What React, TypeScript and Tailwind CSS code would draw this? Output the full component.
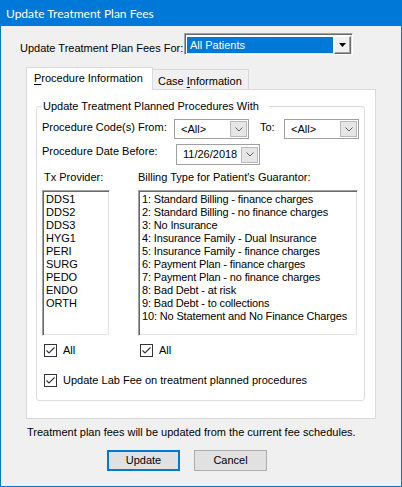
import React from "react";

const font = { fontFamily: '"Liberation Sans", Arial, sans-serif' };

function Check() {
  return (
    <span className="w-[13px] h-[13px] border border-[#333333] bg-white flex items-center justify-center shrink-0">
      <svg width="11" height="11" viewBox="0 0 11 11">
        <polyline points="1.5,5.5 4,8 9.5,2.5" fill="none" stroke="#333333" strokeWidth="1.1" />
      </svg>
    </span>
  );
}

function SmallCombo({ text, w }: { text: string; w: string }) {
  return (
    <div className={`${w} h-[20px] border border-[#a0a0a0] bg-white flex items-center justify-between pl-[6px] pr-[1px] shrink-0`}>
      <span className="text-[11px] leading-[13px] text-black whitespace-nowrap">{text}</span>
      <span className="w-[17px] h-[16px] border border-[#b9b9b9] bg-[#e6e6e6] flex items-center justify-center">
        <svg width="8" height="5" viewBox="0 0 8 5">
          <polyline points="0.5,0.5 4,4 7.5,0.5" fill="none" stroke="#606060" strokeWidth="1" />
        </svg>
      </span>
    </div>
  );
}

const providers = ["DDS1", "DDS2", "DDS3", "HYG1", "PERI", "SURG", "PEDO", "ENDO", "ORTH"];
const billing = [
  "1: Standard Billing - finance charges",
  "2: Standard Billing - no finance charges",
  "3: No Insurance",
  "4: Insurance Family - Dual Insurance",
  "5: Insurance Family - finance charges",
  "6: Payment Plan - finance charges",
  "7: Payment Plan - no finance charges",
  "8: Bad Debt - at risk",
  "9: Bad Debt - to collections",
  "10: No Statement and No Finance Charges",
];

const sunken =
  "border-t border-l border-t-[#a0a0a0] border-l-[#a0a0a0] border-b border-r border-b-white border-r-white shadow-[inset_1px_1px_0_#696969,inset_-1px_-1px_0_#e3e3e3]";

export default function App() {
  return (
    <div
      className="w-[402px] h-[487px] border border-[#0078d7] bg-[#f0f0f0] flex flex-col text-black text-[11px] leading-[13px] whitespace-nowrap"
      style={font}
    >
      <div
        className="h-[25px] bg-[#0078d7] text-white text-[12px] flex items-center pl-[5px]"
        style={{ fontFamily: 'Lato, "Noto Sans", sans-serif' }}
      >
        Update Treatment Plan Fees
      </div>

      <div className="pl-[19px] flex flex-col">
        {/* top row */}
        <div className="mt-[7px] flex items-start">
          <span className="w-[164px] shrink-0 mt-[9px]">Update Treatment Plan Fees For:</span>
          <div className={`w-[169px] h-[22px] shrink-0 ${sunken} bg-white flex p-[1px] pl-[2px] pt-[2px]`}>
            <div className="flex-1 h-[16px] bg-[#0078d7] text-white flex items-center pl-[3px] mt-[1px]">All Patients</div>
            <div className="w-[17px] h-[18px] ml-[1px] bg-[#f0f0f0] border-t border-l border-t-white border-l-white border-b border-r border-b-[#696969] border-r-[#696969] shadow-[inset_-1px_-1px_0_#a0a0a0] flex items-center justify-center">
              <svg width="7" height="4" viewBox="0 0 7 4">
                <polygon points="0,0 7,0 3.5,4" fill="#000" />
              </svg>
            </div>
          </div>
        </div>

        {/* tabs */}
        <div className="ml-[6px] mt-[12px] flex flex-col">
          <div className="h-[22px] flex items-end">
            <div className="w-[127px] h-[23px] -mb-[1px] bg-white border-t border-l border-r border-[#d9d9d9] relative z-10 pl-[7px] pt-[4px]">
              <span className="underline underline-offset-2">P</span>rocedure Information
            </div>
            <div className="w-[96px] h-[20px] bg-[#f0f0f0] border-t border-r border-[#d9d9d9] pl-[5px] pt-[5px]">
              Case <span className="underline underline-offset-2">I</span>nformation
            </div>
          </div>
          <div className="w-[350px] h-[330px] bg-white border border-[#d9d9d9] flex flex-col pl-[9px]">
            <fieldset className="mt-[10px] w-[329px] border border-[#dcdcdc] rounded-[3px] px-[5px] pb-[13px] flex flex-col">
              <legend className="pl-[1px] pr-[10px] leading-[13px]">Update Treatment Planned Procedures With</legend>

              <div className="mt-[6px] flex items-start">
                <span className="w-[132px] shrink-0 mt-[2px]">Procedure Code(s) From:</span>
                <SmallCombo text="<All>" w="w-[75px]" />
                <span className="ml-[11px] w-[24px] shrink-0 mt-[2px]">To:</span>
                <SmallCombo text="<All>" w="w-[75px]" />
              </div>

              <div className="mt-[5px] flex items-start">
                <span className="w-[134px] shrink-0 mt-[1px]">Procedure Date Before:</span>
                <SmallCombo text="11/26/2018" w="w-[84px] h-[21px]" />
              </div>

              <div className="mt-[6px] flex">
                <span className="ml-[2px] w-[94px] shrink-0">Tx Provider:</span>
                <span>Billing Type for Patient&apos;s Guarantor:</span>
              </div>

              <div className="mt-[6px] flex">
                <div className={`w-[68px] h-[146px] shrink-0 bg-white ${sunken} pl-[3px] pt-[2px] flex flex-col`}>
                  {providers.map((p) => (
                    <div key={p} className="h-[13px] leading-[13px]">{p}</div>
                  ))}
                </div>
                <div className={`ml-[28px] w-[220px] h-[146px] shrink-0 bg-white ${sunken} pl-[3px] pt-[2px] flex flex-col overflow-hidden tracking-[-0.15px]`}>
                  {billing.map((b) => (
                    <div key={b} className="h-[13px] leading-[13px] whitespace-nowrap">{b}</div>
                  ))}
                </div>
              </div>

              <div className="mt-[8px] flex items-center">
                <div className="ml-[2px] w-[96px] shrink-0 flex items-center">
                  <Check />
                  <span className="ml-[6px]">All</span>
                </div>
                <div className="flex items-center">
                  <Check />
                  <span className="ml-[6px]">All</span>
                </div>
              </div>

              <div className="mt-[17px] ml-[2px] flex items-center">
                <Check />
                <span className="ml-[6px]">Update Lab Fee on treatment planned procedures</span>
              </div>
            </fieldset>
          </div>
        </div>

        <div className="mt-[7px] ml-[7px]">Treatment plan fees will be updated from the current fee schedules.</div>

        <div className="mt-[11px] ml-[87px] flex">
          <button className="w-[73px] h-[21px] border-2 border-[#0078d7] bg-[#e1e1e1] flex items-center justify-center">Update</button>
          <button className="ml-[14px] w-[73px] h-[21px] border border-[#adadad] bg-[#e1e1e1] flex items-center justify-center">Cancel</button>
        </div>
      </div>
    </div>
  );
}
